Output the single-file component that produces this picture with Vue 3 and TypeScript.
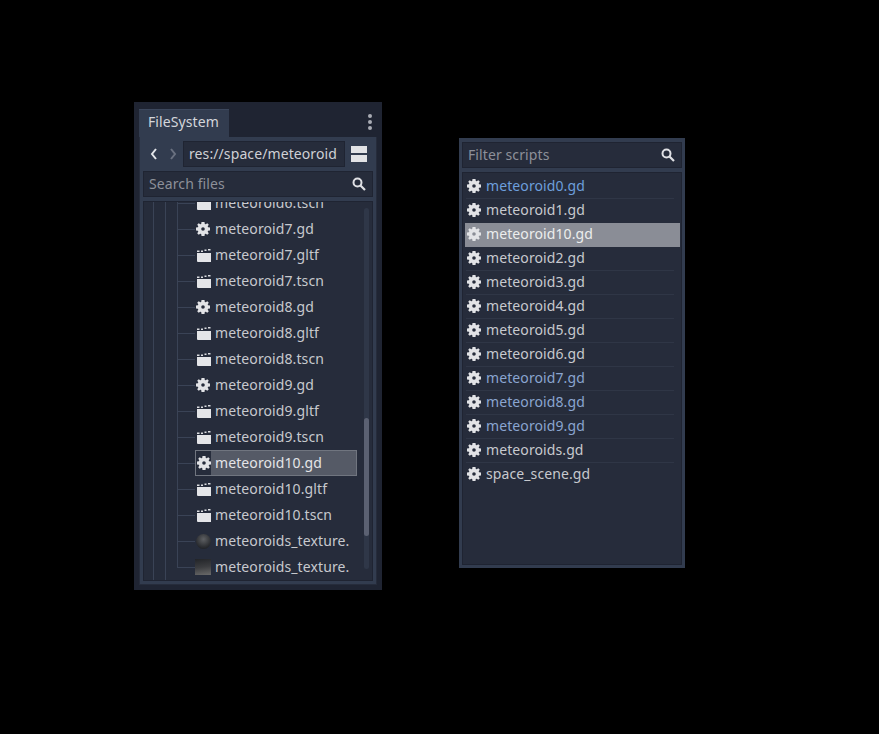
<script setup lang="ts">
type Kind = 'gd' | 'scene' | 'sphere' | 'tex'
interface FileRow { name: string; kind: Kind; selected?: boolean }
const rows: FileRow[] = [
  { name: 'meteoroid6.tscn', kind: 'scene' },
  { name: 'meteoroid7.gd', kind: 'gd' },
  { name: 'meteoroid7.gltf', kind: 'scene' },
  { name: 'meteoroid7.tscn', kind: 'scene' },
  { name: 'meteoroid8.gd', kind: 'gd' },
  { name: 'meteoroid8.gltf', kind: 'scene' },
  { name: 'meteoroid8.tscn', kind: 'scene' },
  { name: 'meteoroid9.gd', kind: 'gd' },
  { name: 'meteoroid9.gltf', kind: 'scene' },
  { name: 'meteoroid9.tscn', kind: 'scene' },
  { name: 'meteoroid10.gd', kind: 'gd', selected: true },
  { name: 'meteoroid10.gltf', kind: 'scene' },
  { name: 'meteoroid10.tscn', kind: 'scene' },
  { name: 'meteoroids_texture.', kind: 'sphere' },
  { name: 'meteoroids_texture.', kind: 'tex' },
]
interface Script { name: string; selected?: boolean; tint?: string }
const scripts: Script[] = [
  { name: 'meteoroid0.gd', tint: 'blue' },
  { name: 'meteoroid1.gd' },
  { name: 'meteoroid10.gd', selected: true },
  { name: 'meteoroid2.gd' },
  { name: 'meteoroid3.gd' },
  { name: 'meteoroid4.gd' },
  { name: 'meteoroid5.gd' },
  { name: 'meteoroid6.gd' },
  { name: 'meteoroid7.gd', tint: 'soft' },
  { name: 'meteoroid8.gd', tint: 'soft' },
  { name: 'meteoroid9.gd', tint: 'soft' },
  { name: 'meteoroids.gd' },
  { name: 'space_scene.gd' },
]
const gear = 'M5.500 0h3l.3 1.900.9.400L11.300 1.200l1.500 1.500-1.100 1.600.4.900 1.900.3v3l-1.900.3-.4.900 1.100 1.600-1.500 1.500-1.600-1.100-.9.400-.3 1.900h-3l-.3-1.900-.9-.4-1.600 1.100-1.500-1.500 1.100-1.600-.4-.9L0 8.500v-3l1.900-.3.4-.9-1.100-1.600 1.500-1.500 1.600 1.100.9-.4zM7 5.200a1.800 1.800 0 1 0 0 3.600 1.800 1.800 0 0 0 0-3.600z'
</script>

<template>
  <div class="stage">
    <section class="dock">
      <div class="tabbar">
        <div class="tab">FileSystem</div>
        <div class="menu"><i></i><i></i><i></i></div>
      </div>
      <div class="body">
        <div class="pathbar">
          <svg class="nav" width="8" height="12" viewBox="0 0 8 12"><path d="M6 1 2 6l4 5" fill="none" stroke="#e4e6ea" stroke-width="2"/></svg>
          <svg class="nav next" width="8" height="12" viewBox="0 0 8 12"><path d="M2 1l4 5-4 5" fill="none" stroke="#6a7180" stroke-width="2"/></svg>
          <div class="path">res://space/meteoroid</div>
          <div class="split"><i></i><i></i></div>
        </div>
        <div class="field search">
          <span class="ph">Search files</span>
          <svg width="14" height="14" viewBox="0 0 14 14"><circle cx="5.500" cy="5.500" r="4" fill="none" stroke="#e0e1e5" stroke-width="2"/><path d="M8.500 8.500 13 13" stroke="#e0e1e5" stroke-width="2.200"/></svg>
        </div>
        <div class="tree">
          <div class="guide"></div>
          <div class="guide"></div>
          <div class="rows">
            <div v-for="r in rows" :key="r.name + r.kind" class="row" :class="{ sel: r.selected }">
              <span class="stub"></span>
              <span class="cell">
                <span class="ico">
                  <svg v-if="r.kind === 'gd'" width="14" height="14" viewBox="0 0 14 14"><path :d="gear" fill="#e2e3e6" fill-rule="evenodd"/></svg>
                  <svg v-else-if="r.kind === 'scene'" width="15" height="14" viewBox="0 0 15 14"><path d="M1 5h14v9H2a1 1 0 0 1-1-1z" fill="#e4e5e8"/><path d="M1 2.500h2.500v1.500H1zM5 2.500h2v1.500H5zM8.500 1.500h2V3h-2zM12 1h2.500v1.500H12z" fill="#dcdde1"/></svg>
                  <span v-else-if="r.kind === 'sphere'" class="sphere"></span>
                  <span v-else class="tex"></span>
                </span>
                <span class="label">{{ r.name }}</span>
              </span>
            </div>
          </div>
          <div class="scroll"><div class="grab"></div></div>
        </div>
      </div>
    </section>

    <section class="scripts">
      <div class="field filter">
        <span class="ph">Filter scripts</span>
        <svg width="14" height="14" viewBox="0 0 14 14"><circle cx="5.500" cy="5.500" r="4" fill="none" stroke="#e0e1e5" stroke-width="2"/><path d="M8.500 8.500 13 13" stroke="#e0e1e5" stroke-width="2.200"/></svg>
      </div>
      <div class="list">
        <div v-for="s in scripts" :key="s.name" class="item" :class="[s.tint, { sel: s.selected }]">
          <svg width="14" height="14" viewBox="0 0 14 14"><path :d="gear" fill="#e2e3e6" fill-rule="evenodd"/></svg>
          <span>{{ s.name }}</span>
        </div>
      </div>
    </section>
  </div>
</template>

<style>
html, body { background: #000; }
</style>

<style scoped>
.stage {
  width: 879px; height: 734px; box-sizing: border-box; overflow: hidden;
  background: #000; display: flex; align-items: flex-start;
  padding: 102px 0 0 134px;
  font: 14px/20px "Noto Sans", sans-serif; color: #cdced3; letter-spacing: .1px;
}
.dock {
  width: 248px; height: 488px; box-sizing: border-box; padding: 5px;
  background: #1f2432; display: flex; flex-direction: column;
}
.tabbar { height: 30px; display: flex; justify-content: space-between; align-items: stretch; flex: none; }
.tab {
  width: 90px; box-sizing: border-box; padding: 2px 0 0 9px; background: #323c4f;
  border-top: 1px solid #3c475c; color: #d4d6db; margin-top: 2px; height: 28px; line-height: 20px;
}
.menu { display: flex; flex-direction: column; gap: 2px; width: 16px; align-items: center; padding-top: 7px; margin-right: -1px; }
.menu i { width: 4px; height: 4px; border-radius: 50%; background: #a9acb4; }
.body { flex: 1; background: #323c4f; border: 1px solid #262c3b; border-top: 0; box-sizing: border-box; min-height: 0; display: flex; flex-direction: column; padding: 4px 3px 3px; }
.pathbar { height: 26px; display: flex; align-items: center; flex: none; margin-bottom: 4px; }
.nav { margin-left: 7px; flex: none; }
.nav.next { margin-left: 11px; margin-right: 6px; }
.path {
  width: 162px; height: 26px; box-sizing: border-box; padding: 2px 0 0 5px; background: #262c3b;
  border: 1px solid #1f2432; overflow: hidden; white-space: nowrap; color: #cfd0d5;
}
.split { margin-left: 6px; width: 16px; display: flex; flex-direction: column; gap: 2px; }
.split i { height: 7px; background: #e2e3e6; }
.field {
  display: flex; justify-content: space-between; align-items: center; box-sizing: border-box;
  height: 26px; background: #262c3b; border: 1px solid #1f2432; flex: none;
}
.search { padding: 0 6px 0 5px; margin-bottom: 4px; }
.ph { color: #8d9099; }
.tree {
  flex: 1; min-height: 0; display: flex; background: #262c3b; border: 1px solid #1f2432;
  box-sizing: border-box; overflow: hidden; position: relative; padding-left: 9px;
}
.guide { width: 12px; flex: none; box-sizing: border-box; border-left: 1px solid #3a4356; }
.rows { width: 181px; flex: none; margin-top: -12px; }
.row { height: 26px; display: flex; align-items: center; position: relative; }
.row::after {
  content: ""; position: absolute; left: 0; top: -13px; height: 26px; border-left: 1px solid #3a4356;
}
.stub { width: 18px; flex: none; height: 1px; background: #3a4356; }
.cell { display: flex; align-items: center; width: 162px; height: 26px; box-sizing: border-box; flex: none; }
.ico { width: 16px; height: 24px; display: flex; align-items: center; justify-content: center; flex: none; margin-right: 4px; }
.label { white-space: nowrap; color: #c7c9ce; }
.row.sel .cell { background: #555a66; border: 1px solid #70757f; }
.row.sel .ico { background: #262c3b; width: 15px; }
.row.sel .label { color: #e4e5e8; }
.sphere { width: 15px; height: 15px; border-radius: 50%; background: radial-gradient(circle at 50% 35%, #5e6063, #2e3034 60%, #121418); }
.tex { width: 16px; height: 16px; background: linear-gradient(172deg, #222428, #3c3d40 50%, #6a6a6a); }
.scroll { position: absolute; left: 220px; top: 6px; width: 5px; height: 361px; background: #2f3748; border-radius: 3px; display: flex; align-items: flex-end; }
.grab { width: 5px; height: 118px; margin-bottom: 33px; background: #5b6172; border-radius: 3px; }

.scripts {
  margin-left: 77px; margin-top: 36px; width: 226px; height: 430px; box-sizing: border-box;
  background: #323c4f; padding: 4px 3px 3px; display: flex; flex-direction: column;
}
.filter { padding: 0 6px 0 5px; margin-bottom: 4px; }
.list {
  flex: 1; background: #262c3b; border: 1px solid #1f2432; box-sizing: border-box; padding: 2px 1px 0 2px;
}
.item {
  height: 24px; display: flex; align-items: center; gap: 5px; padding: 0 0 2px 2px; box-sizing: border-box;
  color: #c7c9ce; position: relative; width: 215px;
}
.item::after { content: ""; position: absolute; left: 1px; width: 208px; bottom: 0; height: 1px; background: #2f3646; }
.item:nth-child(2)::after, .item.sel::after, .item:last-child::after { display: none; }
.item.sel { background: #8a8d96; color: #eceded; }
.item.blue { color: #6d9fdc; }
.item.soft { color: #8aa5d0; }
</style>
